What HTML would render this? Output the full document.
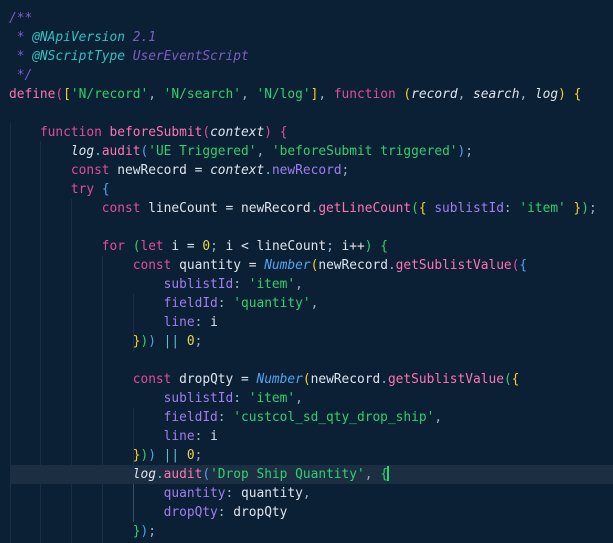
<!DOCTYPE html>
<html><head><meta charset="utf-8"><style>
html,body{margin:0;padding:0;background:#0b2034;width:613px;height:543px;overflow:hidden}
#ed{position:absolute;left:0;top:0;width:613px;height:543px;background:#0b2034}
.l{position:absolute;left:9px;height:19px;line-height:19px;white-space:pre;font-family:"DejaVu Sans Mono","Liberation Mono",monospace;font-size:12.85px;color:#dde4ee}
.hl{position:absolute;left:10px;right:0;top:465px;height:19px;background:#1b2e42}
.g{position:absolute;width:1px;background:#1a2f44}
.c{color:#7d5cc6;font-style:italic}.t{color:#2fc2c4;font-style:italic}
.k{color:#e04d9c}.s{color:#2fd06e}.p{color:#a07ef0}.f{color:#ff74b4}.i{font-style:italic}
.n{color:#4ea6f2;font-style:italic}.y{color:#f5d025}.m{color:#e04d9c}.b{color:#4aa3f0}.gr{color:#2fd06e}.d{color:#5fbfd0}.z{color:#e8d84a}.o{color:#9bb0c8}
.cur{display:inline-block;width:2px;height:15px;background:#2fd06e;vertical-align:-3px;margin-left:-1px}
</style></head><body><div id="ed">
<div class="hl"></div>
<div class="g" style="left:10px;top:123px;height:420px"></div>
<div class="g" style="left:40px;top:142px;height:401px"></div>
<div class="g" style="left:71px;top:199px;height:344px"></div>
<div class="g" style="left:102px;top:256px;height:287px"></div>
<div class="g" style="left:133px;top:294px;height:57px"></div>
<div class="g" style="left:133px;top:408px;height:57px"></div>
<div class="g" style="left:133px;top:484px;height:38px;background:#3a5068"></div>
<div class="l" style="top:9px"><span class="c">/**</span></div>
<div class="l" style="top:28px"><span class="c"> * </span><span class="t">@NApiVersion</span><span class="c"> 2.1</span></div>
<div class="l" style="top:47px"><span class="c"> * </span><span class="t">@NScriptType</span><span class="c"> UserEventScript</span></div>
<div class="l" style="top:66px"><span class="c"> */</span></div>
<div class="l" style="top:85px"><span class="f">define</span><span class="m">(</span><span class="y">[</span><span class="s">'N/record'</span><span class="o">, </span><span class="s">'N/search'</span><span class="o">, </span><span class="s">'N/log'</span><span class="y">]</span><span class="o">, </span><span class="k">function</span> <span class="y">(</span><span class="i">record</span><span class="o">, </span><span class="i">search</span><span class="o">, </span><span class="i">log</span><span class="y">)</span> <span class="y">{</span></div>
<div class="l" style="top:123px">    <span class="k">function</span> <span class="f">beforeSubmit</span><span class="m">(</span><span class="i">context</span><span class="m">)</span> <span class="m">{</span></div>
<div class="l" style="top:142px">        <span class="i">log</span><span class="d">.</span><span class="f">audit</span><span class="b">(</span><span class="s">'UE Triggered'</span><span class="o">, </span><span class="s">'beforeSubmit triggered'</span><span class="b">)</span><span class="o">;</span></div>
<div class="l" style="top:161px">        <span class="k">const</span> newRecord = <span class="i">context</span><span class="d">.</span><span class="p">newRecord</span><span class="o">;</span></div>
<div class="l" style="top:180px">        <span class="k">try</span> <span class="b">{</span></div>
<div class="l" style="top:199px">            <span class="k">const</span> lineCount = newRecord<span class="d">.</span><span class="f">getLineCount</span><span class="gr">(</span><span class="y">{</span> <span class="p">sublistId</span><span class="o">: </span><span class="s">'item'</span> <span class="y">}</span><span class="gr">)</span><span class="o">;</span></div>
<div class="l" style="top:237px">            <span class="k">for</span> <span class="gr">(</span><span class="k">let</span> i = <span class="z">0</span><span class="o">;</span> i &lt; lineCount<span class="o">;</span> i++<span class="gr">)</span> <span class="gr">{</span></div>
<div class="l" style="top:256px">                <span class="k">const</span> quantity = <span class="n">Number</span><span class="y">(</span>newRecord<span class="d">.</span><span class="f">getSublistValue</span><span class="m">(</span><span class="b">{</span></div>
<div class="l" style="top:275px">                    <span class="p">sublistId</span><span class="o">: </span><span class="s">'item'</span><span class="o">,</span></div>
<div class="l" style="top:294px">                    <span class="p">fieldId</span><span class="o">: </span><span class="s">'quantity'</span><span class="o">,</span></div>
<div class="l" style="top:313px">                    <span class="p">line</span><span class="o">: </span>i</div>
<div class="l" style="top:332px">                <span class="y">}</span><span class="gr">)</span><span class="b">)</span> <span class="d">||</span> <span class="z">0</span><span class="o">;</span></div>
<div class="l" style="top:370px">                <span class="k">const</span> dropQty = <span class="n">Number</span><span class="y">(</span>newRecord<span class="d">.</span><span class="f">getSublistValue</span><span class="gr">(</span><span class="y">{</span></div>
<div class="l" style="top:389px">                    <span class="p">sublistId</span><span class="o">: </span><span class="s">'item'</span><span class="o">,</span></div>
<div class="l" style="top:408px">                    <span class="p">fieldId</span><span class="o">: </span><span class="s">'custcol_sd_qty_drop_ship'</span><span class="o">,</span></div>
<div class="l" style="top:427px">                    <span class="p">line</span><span class="o">: </span>i</div>
<div class="l" style="top:446px">                <span class="y">}</span><span class="gr">)</span><span class="b">)</span> <span class="d">||</span> <span class="z">0</span><span class="o">;</span></div>
<div class="l" style="top:465px">                <span class="i">log</span><span class="d">.</span><span class="f">audit</span><span class="b">(</span><span class="s">'Drop Ship Quantity'</span><span class="o">, </span><span class="gr">{</span><span class="cur"></span></div>
<div class="l" style="top:484px">                    <span class="p">quantity</span><span class="o">: </span>quantity<span class="o">,</span></div>
<div class="l" style="top:503px">                    <span class="p">dropQty</span><span class="o">: </span>dropQty</div>
<div class="l" style="top:522px">                <span class="gr">}</span><span class="b">)</span><span class="o">;</span></div>
</div></body></html>
